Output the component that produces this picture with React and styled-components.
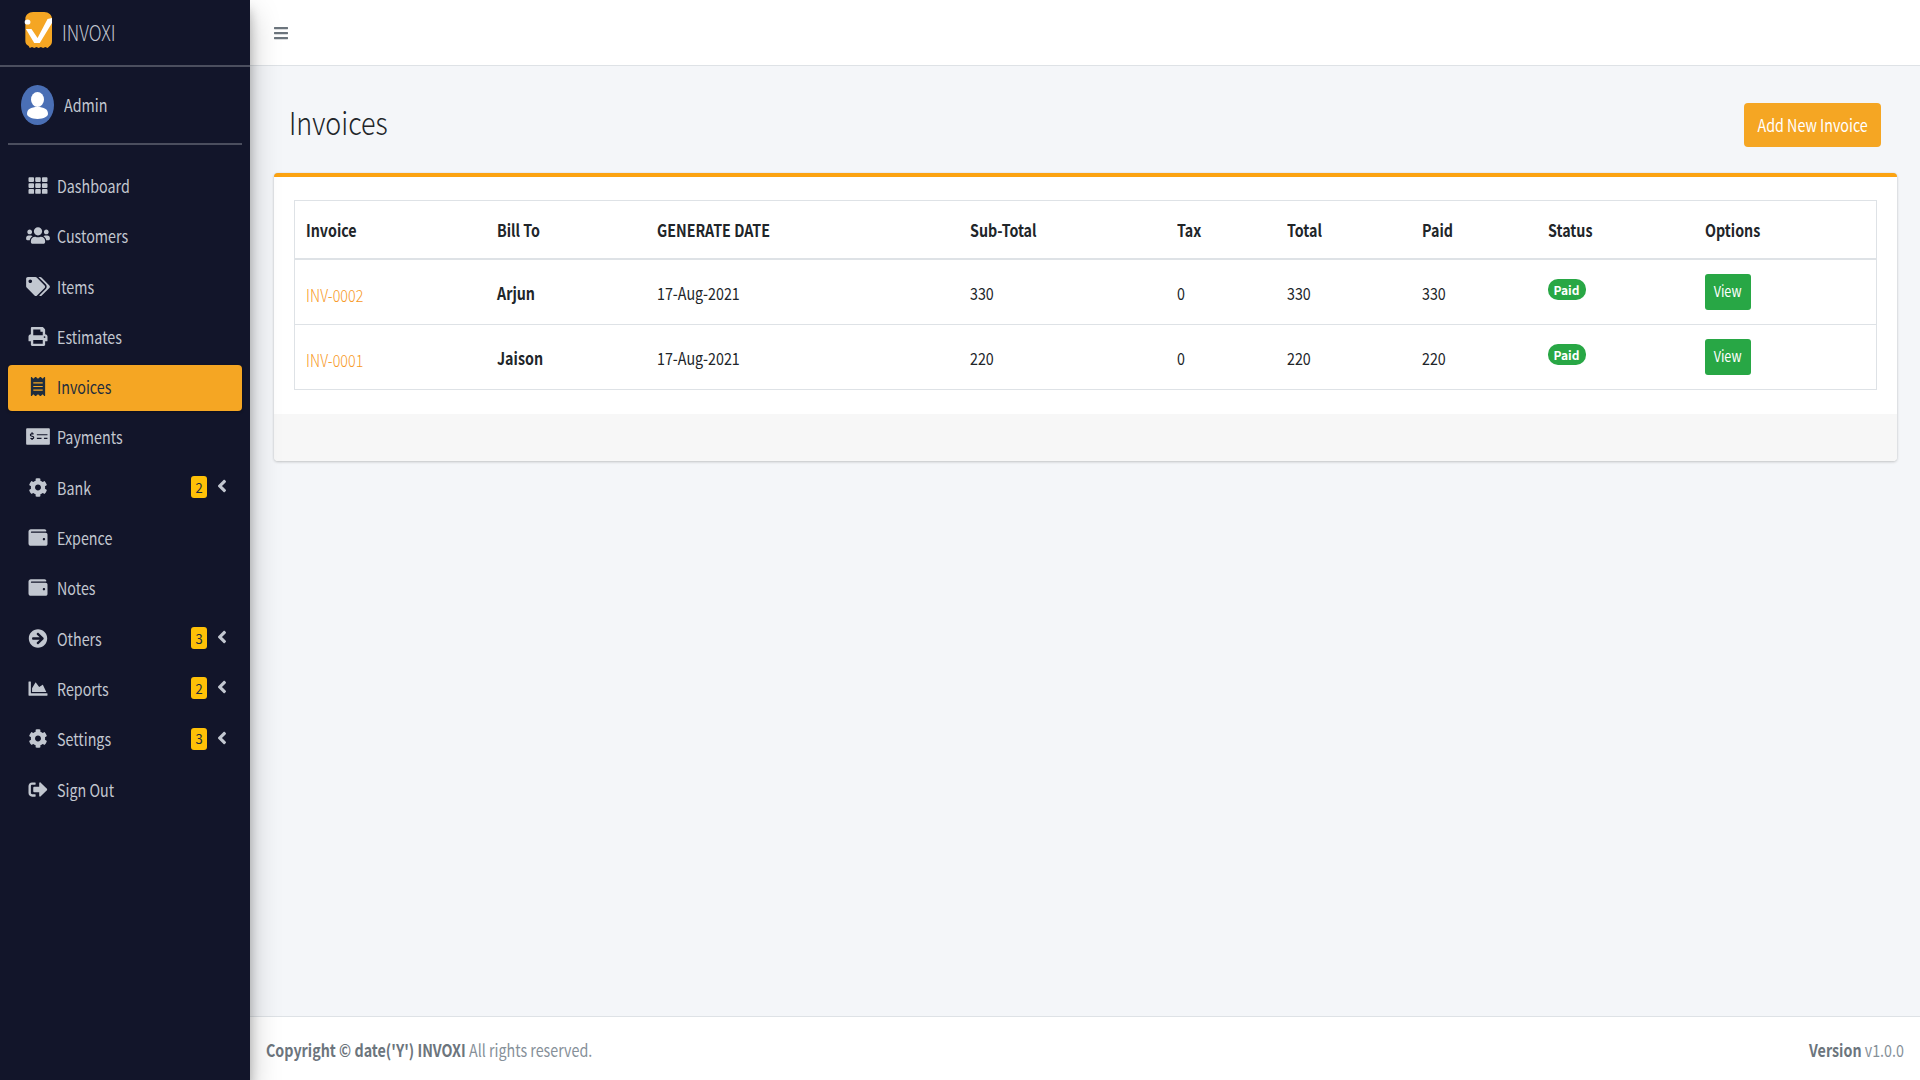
import React from 'react'
import styled, { createGlobalStyle } from 'styled-components'
import {
  FaTh,
  FaUsers,
  FaTags,
  FaPrint,
  FaReceipt,
  FaMoneyCheckAlt,
  FaCog,
  FaWallet,
  FaArrowCircleRight,
  FaChartArea,
  FaSignOutAlt,
  FaAngleLeft,
  FaBars,
} from 'react-icons/fa'

const menu = [
  { label: 'Dashboard', icon: FaTh },
  { label: 'Customers', icon: FaUsers },
  { label: 'Items', icon: FaTags },
  { label: 'Estimates', icon: FaPrint },
  { label: 'Invoices', icon: FaReceipt, active: true },
  { label: 'Payments', icon: FaMoneyCheckAlt },
  { label: 'Bank', icon: FaCog, badge: 2 },
  { label: 'Expence', icon: FaWallet },
  { label: 'Notes', icon: FaWallet },
  { label: 'Others', icon: FaArrowCircleRight, badge: 3 },
  { label: 'Reports', icon: FaChartArea, badge: 2 },
  { label: 'Settings', icon: FaCog, badge: 3 },
  { label: 'Sign Out', icon: FaSignOutAlt },
]

const columns = ['Invoice', 'Bill To', 'GENERATE DATE', 'Sub-Total', 'Tax', 'Total', 'Paid', 'Status', 'Options']

const invoices = [
  { id: 'INV-0002', name: 'Arjun', date: '17-Aug-2021', sub: 330, tax: 0, total: 330, paid: 330 },
  { id: 'INV-0001', name: 'Jaison', date: '17-Aug-2021', sub: 220, tax: 0, total: 220, paid: 220 },
]

const App = () => {
  return (
    <>
      <GlobalStyle />
      <Layout>
        <Sidebar>
          <Brand>
            <LogoMark width="30" height="37" viewBox="0 0 27 37" preserveAspectRatio="none">
              <path
                d="M7 0h13c4 0 7 3 7 7v22c0 3-1 4-2 5l-2 2-2-1-2 1-2-1-2 1-2-1-2 1-2-1-2 1-1-2c-2-1-3-3-3-5V7c0-4 3-7 7-7z"
                fill="#f5a623"
              />
              <path d="M3.5 17h5l5.5 9L23 7l4-1v5L16 31h-5z" fill="#fff" />
              <circle cx="5" cy="10" r="2.6" fill="#fff" />
            </LogoMark>
            <BrandName>
              <Squeezed>INVOXI</Squeezed>
            </BrandName>
          </Brand>
          <UserPanel>
            <svg width="33" height="40" viewBox="0 0 33 40">
              <ellipse cx="16.5" cy="20" rx="16.5" ry="20" fill="#4a6fb5" />
              <ellipse cx="16.5" cy="14.5" rx="6.5" ry="7.5" fill="#fff" />
              <path d="M6 29c0-5 4-7 10.5-7S27 24 27 29c0 2-4 5-10.5 5S6 31 6 29z" fill="#fff" />
            </svg>
            <UserName>
              <Squeezed>Admin</Squeezed>
            </UserName>
          </UserPanel>
          <Nav>
            {menu.map((item) => {
              const Icon = item.icon
              return (
                <NavItem key={item.label} $active={item.active}>
                  <NavIcon>
                    <Icon />
                  </NavIcon>
                  <NavLabel>
                    <Squeezed>{item.label}</Squeezed>
                  </NavLabel>
                  {item.badge && (
                    <>
                      <NavBadge>{item.badge}</NavBadge>
                      <NavArrow>
                        <FaAngleLeft />
                      </NavArrow>
                    </>
                  )}
                </NavItem>
              )
            })}
          </Nav>
        </Sidebar>

        <Main>
          <Topbar>
            <MenuToggle>
              <FaBars />
            </MenuToggle>
          </Topbar>
          <Content>
            <PageHeader>
              <PageTitle>
                <Squeezed>Invoices</Squeezed>
              </PageTitle>
              <AddButton>
                <Squeezed $origin="center">Add New Invoice</Squeezed>
              </AddButton>
            </PageHeader>
            <Card>
              <CardBody>
                <Table>
                  <thead>
                    <tr>
                      {columns.map((col) => (
                        <th key={col}>
                          <Squeezed>{col}</Squeezed>
                        </th>
                      ))}
                    </tr>
                  </thead>
                  <tbody>
                    {invoices.map((row) => (
                      <tr key={row.id}>
                        <td>
                          <InvoiceLink>{row.id}</InvoiceLink>
                        </td>
                        <td>
                          <Squeezed as="strong">{row.name}</Squeezed>
                        </td>
                        <td>
                          <Squeezed>{row.date}</Squeezed>
                        </td>
                        <td>
                          <Squeezed>{row.sub}</Squeezed>
                        </td>
                        <td>
                          <Squeezed>{row.tax}</Squeezed>
                        </td>
                        <td>
                          <Squeezed>{row.total}</Squeezed>
                        </td>
                        <td>
                          <Squeezed>{row.paid}</Squeezed>
                        </td>
                        <td>
                          <PaidBadge>Paid</PaidBadge>
                        </td>
                        <td>
                          <ViewButton>
                            <Squeezed $origin="center">View</Squeezed>
                          </ViewButton>
                        </td>
                      </tr>
                    ))}
                  </tbody>
                </Table>
              </CardBody>
              <CardFooter />
            </Card>
          </Content>
          <Footer>
            <Squeezed>
              <b>Copyright © date('Y') INVOXI</b> All rights reserved.
            </Squeezed>
            <Squeezed $origin="right">
              <b>Version</b> v1.0.0
            </Squeezed>
          </Footer>
        </Main>
      </Layout>
    </>
  )
}

export default App

// Styled Components
const GlobalStyle = createGlobalStyle`
  * {
    box-sizing: border-box;
  }

  body {
    margin: 0;
    font-family: 'Noto Sans CJK SC', 'Noto Sans', sans-serif;
    font-size: 17px;
    color: #212529;
    background-color: #f4f6f9;
  }
`

// the reference text is narrower than any installed face
const Squeezed = styled.span`
  display: inline-block;
  white-space: nowrap;
  transform: scaleX(0.84);
  transform-origin: ${(p) => p.$origin || 'left'} center;
`

const Layout = styled.div`
  display: grid;
  grid-template-columns: 250px 1fr;
  height: 1080px;
  overflow: hidden;
`

const Sidebar = styled.aside`
  background-color: #12152a;
  box-shadow: 0 14px 28px rgba(0, 0, 0, 0.25), 0 10px 10px rgba(0, 0, 0, 0.22);
  z-index: 2;
`

const Brand = styled.div`
  display: flex;
  align-items: center;
  gap: 10px;
  height: 67px;
  padding-left: 22px;
  border-bottom: 2px solid #4b4e5e;
`

const LogoMark = styled.svg`
  flex: none;
  margin-bottom: 4px;
`

const BrandName = styled.span`
  margin-top: -2px;
  color: #c2c7d0;
  font-size: 21px;
  font-weight: 300;
`

const UserPanel = styled.div`
  display: flex;
  align-items: center;
  gap: 10px;
  height: 78px;
  margin: 0 8px;
  padding-left: 13px;
  border-bottom: 2px solid #4b4e5e;
`

const UserName = styled.span`
  margin-top: -2px;
  color: #c2c7d0;
`

const Nav = styled.ul`
  display: flex;
  flex-direction: column;
  gap: 4.3px;
  list-style: none;
  margin: 0;
  padding: 19px 8px 0;
`

const NavItem = styled.li`
  display: flex;
  align-items: center;
  height: 46px;
  padding: 0 0 3px 18px;
  border-radius: 4px;
  background-color: ${(p) => (p.$active ? '#f5a623' : 'transparent')};
  color: ${(p) => (p.$active ? '#1f2d3d' : '#c2c7d0')};
  box-shadow: ${(p) => (p.$active ? '0 1px 3px rgba(0, 0, 0, 0.3)' : 'none')};
`

const NavIcon = styled.span`
  display: flex;
  flex: 0 0 24px;
  margin-right: 7px;

  svg {
    width: 24px;
    height: 19px;
  }
`

const NavLabel = styled.span`
  flex: 1;
`

const NavBadge = styled.span`
  display: flex;
  align-items: center;
  justify-content: center;
  width: 16px;
  height: 22px;
  border-radius: 3px;
  background-color: #ffc107;
  color: #1f2d3d;
  font-size: 13px;
`

const NavArrow = styled.span`
  display: flex;
  margin: -2px 10.5px 0 4.5px;
  font-size: 20px;
`

const Main = styled.main`
  display: flex;
  flex-direction: column;
  min-width: 0;
`

const Topbar = styled.header`
  display: flex;
  align-items: center;
  height: 66px;
  padding-left: 23px;
  background-color: #ffffff;
  border-bottom: 1px solid #dee2e6;
`

const MenuToggle = styled.span`
  display: flex;
  color: #6c757d;
  font-size: 16px;
`

const Content = styled.section`
  flex: 1;
  padding: 37px 23px 0 24px;
`

const PageHeader = styled.div`
  display: flex;
  align-items: center;
  justify-content: space-between;
  height: 44px;
  padding: 0 16px 0 15px;
  margin-bottom: 26px;
`

const PageTitle = styled.h1`
  margin: 0 0 8px;
  font-size: 32px;
  line-height: 36px;
  font-weight: 300;
  color: #212529;
`

const AddButton = styled.button`
  height: 44px;
  width: 137px;
  padding: 0 0 2px;
  border: 0;
  border-radius: 4px;
  background-color: #f5a623;
  color: #ffffff;
  font-family: inherit;
  font-size: 17px;
`

const Card = styled.div`
  border-top: 4px solid #fca311;
  border-radius: 4px;
  background-color: #ffffff;
  box-shadow: 0 0 1px rgba(0, 0, 0, 0.125), 0 1px 3px rgba(0, 0, 0, 0.2);
  overflow: hidden;
`

const CardBody = styled.div`
  padding: 23px 20px 24px;
`

const CardFooter = styled.div`
  height: 47px;
  background-color: #f7f7f7;
`

const Table = styled.table`
  width: 100%;
  table-layout: fixed;
  border-collapse: collapse;
  border: 1px solid #dee2e6;

  th {
    height: 58px;
    padding: 0 11px;
    text-align: left;
    font-weight: 700;
    color: #212529;
    border-bottom: 2px solid #dee2e6;
  }

  td {
    height: 65.5px;
    padding: 2px 11px 0;
    color: #212529;
    border-top: 1px solid #dee2e6;
  }

  th:nth-child(1) { width: 191px; }
  th:nth-child(2) { width: 160px; }
  th:nth-child(3) { width: 313px; }
  th:nth-child(4) { width: 207px; }
  th:nth-child(5) { width: 110px; }
  th:nth-child(6) { width: 135px; }
  th:nth-child(7) { width: 126px; }
  th:nth-child(8) { width: 157px; }
`

const InvoiceLink = styled(Squeezed).attrs({ as: 'a' })`
  position: relative;
  top: 2px;
  color: #f7981d;
  font-weight: 300;
  letter-spacing: 0.1px;
`

const PaidBadge = styled.span`
  display: inline-flex;
  align-items: center;
  justify-content: center;
  position: relative;
  top: -5px;
  width: 38px;
  height: 21px;
  border-radius: 10px;
  background-color: #28a745;
  color: #ffffff;
  font-size: 12px;
  font-weight: 700;
`

const ViewButton = styled.button`
  display: block;
  width: 46px;
  height: 36px;
  margin: -2px 0 0;
  padding: 0 0 2px;
  border: 0;
  border-radius: 3px;
  background-color: #28a745;
  color: #ffffff;
  font-family: inherit;
  font-size: 15px;
`

const Footer = styled.footer`
  display: flex;
  align-items: center;
  justify-content: space-between;
  height: 64px;
  padding: 1px 16px 0;
  background-color: #ffffff;
  border-top: 1px solid #dee2e6;
  color: #869099;

  b {
    color: #6c757d;
  }
`
